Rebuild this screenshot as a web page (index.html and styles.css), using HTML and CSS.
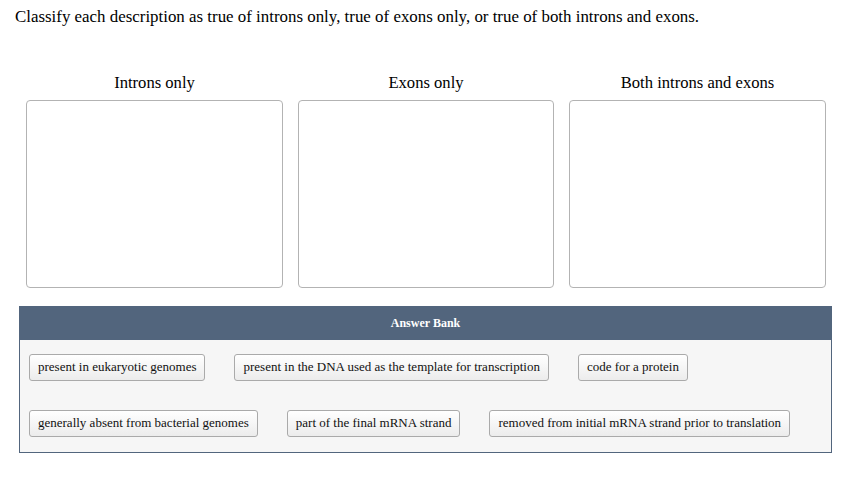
FILE: index.html
```html
<!DOCTYPE html>
<html>
<head>
<meta charset="utf-8">
<link rel="stylesheet" href="styles.css">
</head>
<body>
<div class="page">
  <p class="prompt">Classify each description as true of introns only, true of exons only, or true of both introns and exons.</p>
  <div class="bins">
    <div class="bin">
      <div class="bin-title">Introns only</div>
      <div class="bin-box"></div>
    </div>
    <div class="bin">
      <div class="bin-title">Exons only</div>
      <div class="bin-box"></div>
    </div>
    <div class="bin">
      <div class="bin-title">Both introns and exons</div>
      <div class="bin-box"></div>
    </div>
  </div>
  <div class="bank">
    <div class="bank-head">Answer Bank</div>
    <div class="bank-body">
      <div class="chip">present in eukaryotic genomes</div>
      <div class="chip">present in the DNA used as the template for transcription</div>
      <div class="chip">code for a protein</div>
      <div class="chip">generally absent from bacterial genomes</div>
      <div class="chip">part of the final mRNA strand</div>
      <div class="chip">removed from initial mRNA strand prior to translation</div>
    </div>
  </div>
</div>
</body>
</html>
```
FILE: styles.css
```css
html, body {
  margin: 0;
  padding: 0;
  background: #fff;
}
body {
  font-family: "Liberation Serif", "Times New Roman", serif;
  color: #000;
}
.page {
  padding: 8px 0 0 0;
}
.prompt {
  margin: 0 0 0 15px;
  font-size: 16.9px;
  line-height: 18px;
}
.bins {
  display: grid;
  grid-template-columns: 257px 256px 257px;
  column-gap: 15px;
  margin: 48px 0 0 26px;
  width: 800px;
}
.bin-title {
  font-size: 16.6px;
  line-height: 18px;
  text-align: center;
  margin-bottom: 8px;
}
.bin-box {
  height: 186px;
  border: 1px solid #b3b3b3;
  border-radius: 4px;
  background: #fff;
}
.bank {
  margin: 18px 0 0 19px;
  width: 813px;
  border: 1px solid #52657d;
  box-sizing: border-box;
}
.bank-head {
  background: #52657d;
  color: #fff;
  font-weight: bold;
  font-size: 12px;
  height: 33px;
  line-height: 33px;
  text-align: center;
}
.bank-body {
  background: #f6f6f6;
  display: flex;
  flex-wrap: wrap;
  column-gap: 29px;
  row-gap: 29px;
  padding: 14px 10px 15px 9px;
}
.chip {
  font-size: 13px;
  line-height: 24px;
  height: 25px;
  padding: 0 8px;
  border: 1px solid #aaa;
  border-radius: 3px;
  background: linear-gradient(#ffffff, #ececec);
  color: #111;
  white-space: nowrap;
}
```
